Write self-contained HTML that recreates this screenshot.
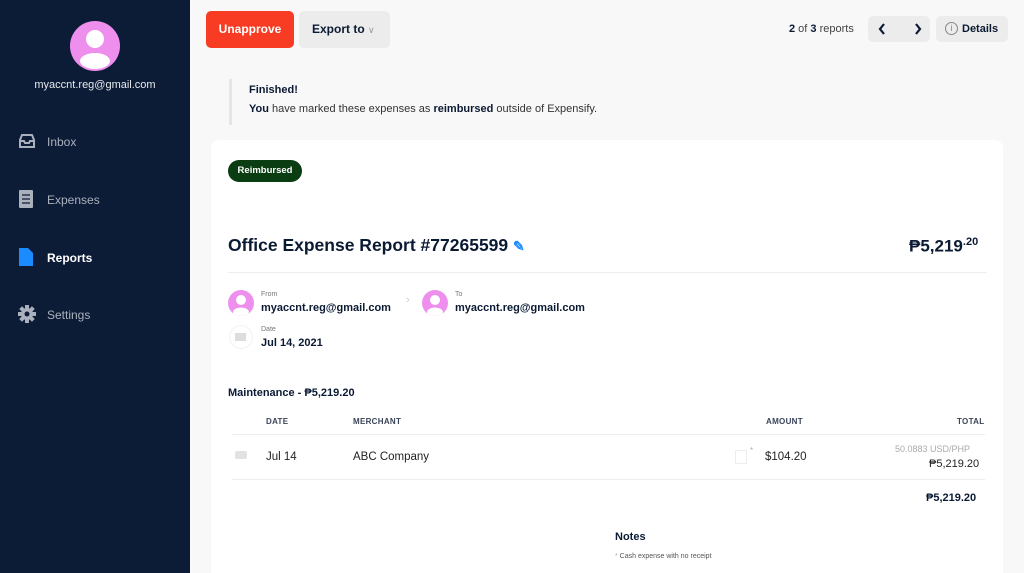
<!DOCTYPE html>
<html><head><meta charset="utf-8"><style>
*{box-sizing:border-box;margin:0;padding:0}
html,body{width:1024px;height:573px;overflow:hidden}
body{font-family:"Liberation Sans",sans-serif;background:#f8f8f8;position:relative;color:#0b1a33}
.side{position:absolute;left:0;top:0;width:190px;height:573px;background:#0c1b36}
.abs{position:absolute}
.av{border-radius:50%;background:#ee8fee;overflow:hidden}
.nav{position:absolute;left:47px;font-size:12px;color:#aab1bd}
.b{font-weight:bold}
.card{position:absolute;left:211px;top:140px;width:792px;height:433px;background:#fff;border-radius:8px 8px 0 0}
.th{position:absolute;font-size:8px;font-weight:bold;color:#3a4458;letter-spacing:.3px}
</style></head><body>
<div class="side">
  <div class="abs av" style="left:70px;top:21px;width:50px;height:50px">
    <svg width="50" height="50"><circle cx="25" cy="18" r="9" fill="#fff"/><ellipse cx="25" cy="40" rx="15" ry="8" fill="#fff"/></svg>
  </div>
  <div class="abs" style="left:0;width:190px;top:79px;text-align:center;color:#e8eaee;font-size:11px">myaccnt.reg@gmail.com</div>
  <svg class="abs" style="left:19px;top:134px" width="16" height="14"><path d="M1 6 L3 1 H13 L15 6 V13 H1Z M1 7 H5 L6 9 H10 L11 7 H15" fill="none" stroke="#aab1bd" stroke-width="2"/></svg>
  <div class="nav" style="top:135px">Inbox</div>
  <svg class="abs" style="left:19px;top:190px" width="14" height="18"><rect x="0" y="0" width="14" height="18" rx="1" fill="#aab1bd"/><path d="M3 5H11M3 9H11M3 13H11" stroke="#0c1b36" stroke-width="1.3"/></svg>
  <div class="nav" style="top:193px">Expenses</div>
  <svg class="abs" style="left:19px;top:248px" width="14" height="18"><path d="M0 0H9L14 5V18H0Z" fill="#1a8cff"/></svg>
  <div class="nav b" style="top:251px;color:#fff">Reports</div>
  <svg class="abs" style="left:18px;top:305px" width="18" height="18" viewBox="0 0 18 18"><g fill="#aab1bd"><circle cx="9" cy="9" r="6"/><rect x="7" y="0" width="4" height="18"/><rect x="0" y="7" width="18" height="4"/><rect x="7" y="0" width="4" height="18" transform="rotate(45 9 9)"/><rect x="7" y="0" width="4" height="18" transform="rotate(-45 9 9)"/></g><circle cx="9" cy="9" r="2.5" fill="#0c1b36"/></svg>
  <div class="nav" style="top:308px">Settings</div>
</div>

<div class="abs b" style="left:206px;top:11px;width:88px;height:37px;background:#f73c23;border-radius:5px;color:#fff;font-size:12px;line-height:37px;text-align:center">Unapprove</div>
<div class="abs b" style="left:299px;top:11px;width:91px;height:37px;background:#ececec;border-radius:5px;font-size:12px;line-height:37px;padding-left:13px">Export to <span style="font-weight:normal;color:#999;font-size:9px">∨</span></div>
<div class="abs" style="left:789px;top:23px;font-size:11px;color:#444"><b style="color:#0b1a33">2</b> of <b style="color:#0b1a33">3</b> reports</div>
<div class="abs" style="left:868px;top:16px;width:62px;height:26px;background:#ececec;border-radius:5px"></div>
<svg class="abs" style="left:878px;top:22px" width="44" height="14"><path d="M6 2L2 7L6 12M38 2L42 7L38 12" fill="none" stroke="#0b1a33" stroke-width="2.2"/></svg>
<div class="abs b" style="left:936px;top:16px;width:72px;height:26px;background:#ececec;border-radius:5px;font-size:11px;line-height:26px;padding-left:26px">Details</div>
<div class="abs" style="left:945px;top:22px;width:13px;height:13px;border:1px solid #888;border-radius:50%;font-size:9px;text-align:center;line-height:11px;color:#888">i</div>

<div class="abs" style="left:229px;top:79px;width:3px;height:46px;background:#e6e6e6"></div>
<div class="abs b" style="left:249px;top:84px;font-size:11px">Finished!</div>
<div class="abs" style="left:249px;top:103px;font-size:11px;color:#333"><b style="color:#0b1a33">You</b> have marked these expenses as <b style="color:#0b1a33">reimbursed</b> outside of Expensify.</div>

<div class="card"></div>
<div class="abs b" style="left:228px;top:160px;width:74px;height:22px;border-radius:11px;background:#0a3d12;color:#fff;font-size:9.5px;line-height:22px;text-align:center">Reimbursed</div>
<div class="abs b" style="left:228px;top:235px;font-size:17.5px">Office Expense Report #77265599 <span style="color:#1a8cff;font-size:14px">✎</span></div>
<div class="abs b" style="left:909px;top:236px;font-size:17px">₱5,219<sup style="font-size:11px">.20</sup></div>
<div class="abs" style="left:228px;top:272px;width:759px;height:1px;background:#eee"></div>

<div class="abs av" style="left:228px;top:290px;width:26px;height:26px"><svg width="26" height="26"><circle cx="13" cy="10" r="5" fill="#fff"/><ellipse cx="13" cy="22" rx="8" ry="4.5" fill="#fff"/></svg></div>
<div class="abs" style="left:261px;top:291px;font-size:7px;color:#777">From</div>
<div class="abs b" style="left:261px;top:302px;font-size:11px">myaccnt.reg@gmail.com</div>
<div class="abs" style="left:406px;top:294px;font-size:11px;color:#ccc">›</div>
<div class="abs av" style="left:422px;top:290px;width:26px;height:26px"><svg width="26" height="26"><circle cx="13" cy="10" r="5" fill="#fff"/><ellipse cx="13" cy="22" rx="8" ry="4.5" fill="#fff"/></svg></div>
<div class="abs" style="left:455px;top:291px;font-size:7px;color:#777">To</div>
<div class="abs b" style="left:455px;top:302px;font-size:11px">myaccnt.reg@gmail.com</div>
<div class="abs" style="left:229px;top:325px;width:24px;height:24px;border-radius:50%;border:1px solid #f2f2f2"></div>
<div class="abs" style="left:235px;top:333px;width:11px;height:8px;background:#ddd"></div>
<div class="abs" style="left:261px;top:326px;font-size:7px;color:#777">Date</div>
<div class="abs b" style="left:261px;top:337px;font-size:11px">Jul 14, 2021</div>

<div class="abs b" style="left:228px;top:387px;font-size:11px">Maintenance - ₱5,219.20</div>
<div class="th" style="left:266px;top:417px">DATE</div>
<div class="th" style="left:353px;top:417px">MERCHANT</div>
<div class="th" style="left:766px;top:417px">AMOUNT</div>
<div class="th" style="left:957px;top:417px">TOTAL</div>
<div class="abs" style="left:232px;top:434px;width:753px;height:1px;background:#eee"></div>
<div class="abs" style="left:235px;top:451px;width:12px;height:8px;background:#e2e2e2;border-radius:2px"></div>
<div class="abs" style="left:266px;top:451px;font-size:11.5px;color:#222">Jul 14</div>
<div class="abs" style="left:353px;top:451px;font-size:11.5px;color:#222">ABC Company</div>
<div class="abs" style="left:735px;top:450px;width:12px;height:14px;border:1px solid #eee"></div>
<div class="abs" style="left:750px;top:446px;font-size:8px;color:#aaa">*</div>
<div class="abs" style="left:765px;top:451px;font-size:11.5px;color:#222">$104.20</div>
<div class="abs" style="left:895px;top:444px;font-size:9px;color:#aaa">50.0883 USD/PHP</div>
<div class="abs" style="left:929px;top:458px;font-size:11px;color:#222">₱5,219.20</div>
<div class="abs" style="left:232px;top:479px;width:753px;height:1px;background:#eee"></div>
<div class="abs b" style="left:926px;top:492px;font-size:11px">₱5,219.20</div>
<div class="abs b" style="left:615px;top:531px;font-size:11px">Notes</div>
<div class="abs" style="left:615px;top:553px;font-size:7px;color:#555"><span style="color:#aaa">*</span> Cash expense with no receipt</div>
</body></html>
